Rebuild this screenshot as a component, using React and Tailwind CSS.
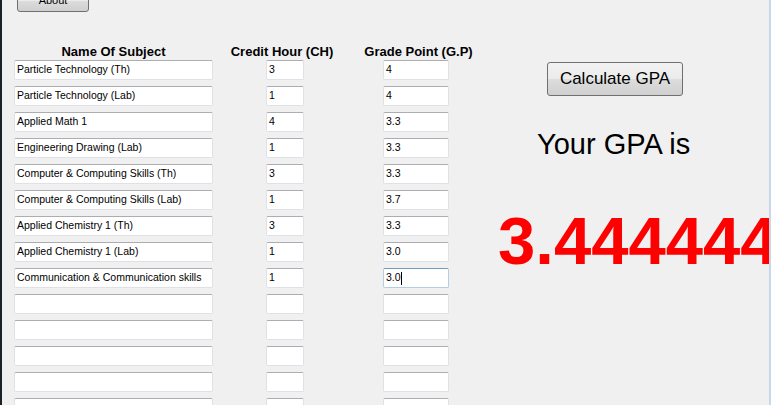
const subjects = [
  { name: "Particle Technology (Th)", ch: "3", gp: "4" },
  { name: "Particle Technology (Lab)", ch: "1", gp: "4" },
  { name: "Applied Math 1", ch: "4", gp: "3.3" },
  { name: "Engineering Drawing (Lab)", ch: "1", gp: "3.3" },
  { name: "Computer & Computing Skills (Th)", ch: "3", gp: "3.3" },
  { name: "Computer & Computing Skills (Lab)", ch: "1", gp: "3.7" },
  { name: "Applied Chemistry 1 (Th)", ch: "3", gp: "3.3" },
  { name: "Applied Chemistry 1 (Lab)", ch: "1", gp: "3.0" },
  { name: "Communication & Communication skills", ch: "1", gp: "3.0", focus: true },
  { name: "", ch: "", gp: "" },
  { name: "", ch: "", gp: "" },
  { name: "", ch: "", gp: "" },
  { name: "", ch: "", gp: "" },
  { name: "", ch: "", gp: "" },
];

function TextBox({ value, width, focused, className = "" }) {
  return (
    <div
      className={`${width} ${className} shrink-0 h-[20px] flex items-center pl-[2px] bg-white border rounded-[2px] text-[10.5px] text-black whitespace-nowrap overflow-hidden ${
        focused
          ? "border-[#b3cde6] border-t-[#6f9ac4]"
          : "border-[#dfe1e6] border-t-[#abadb3]"
      }`}
    >
      {value}
      {focused && <span className="inline-block w-px h-[13px] bg-black" />}
    </div>
  );
}

function WinButton({ children, className = "" }) {
  return (
    <button
      className={`${className} shrink-0 border border-[#707070] rounded-[3px] bg-[linear-gradient(#f2f2f2_0%,#ebebeb_50%,#dddddd_51%,#cfcfcf_100%)] text-black`}
    >
      {children}
    </button>
  );
}

export default function App() {
  return (
    <div className="w-[771px] h-[405px] overflow-hidden flex bg-[#f0f0f0] font-['Liberation_Sans',Arial,sans-serif]">
      <div className="w-[2px] bg-[#1c2028] shrink-0" />

      <div className="flex-1 flex overflow-hidden">
        {/* subject table */}
        <div className="w-[447px] shrink-0 pl-[12px] flex flex-col">
          <WinButton className="ml-[3px] mt-[-11px] w-[72px] h-[23px] text-[11px]">
            About
          </WinButton>

          <div className="flex mt-[32px] text-[13px] leading-[15px] font-bold text-black whitespace-nowrap">
            <div className="w-[199px] shrink-0 text-center">Name Of Subject</div>
            <div className="ml-[16px] w-[106px] shrink-0 text-center">Credit Hour (CH)</div>
            <div className="ml-[27px] w-[113px] shrink-0 text-center">Grade Point (G.P)</div>
          </div>

          <div className="flex flex-col gap-[6px] mt-[1px]">
            {subjects.map((s, i) => (
              <div key={i} className="flex">
                <TextBox value={s.name} width="w-[199px]" />
                <TextBox value={s.ch} width="w-[38px]" className="ml-[53px]" />
                <TextBox value={s.gp} width="w-[66px]" className="ml-[79px]" focused={s.focus} />
              </div>
            ))}
          </div>
        </div>

        {/* result panel */}
        <div className="ml-[49px] flex flex-col shrink-0">
          <WinButton className="ml-[49px] mt-[62px] w-[136px] h-[34px] text-[17px]">
            Calculate GPA
          </WinButton>
          <div className="ml-[39px] mt-[32px] text-[29px] leading-[32px] text-black whitespace-nowrap">
            Your GPA is
          </div>
          <div className="mt-[47px] text-[67px] leading-[67px] font-bold text-[#ff0000] whitespace-nowrap">
            3.444444
          </div>
        </div>
      </div>

      <div className="w-[2px] bg-[#c9d7ea] shrink-0" />
    </div>
  );
}
